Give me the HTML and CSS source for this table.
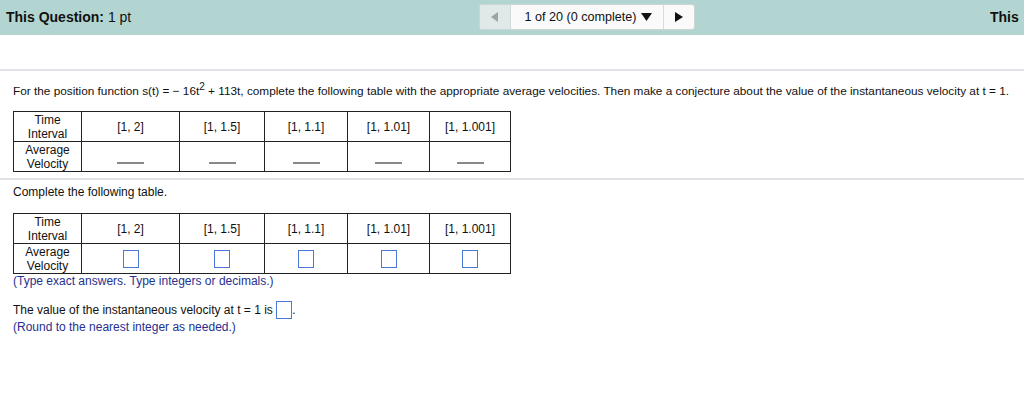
FILE: index.html
```html
<!DOCTYPE html>
<html>
<head>
<meta charset="utf-8">
<link rel="stylesheet" href="styles.css">
</head>
<body>
<div class="header">
  <div class="hleft"><b>This Question:</b> 1 pt</div>
  <div class="nav">
    <div class="nbtn prev"><svg width="8" height="10" viewBox="0 0 8 10"><path d="M7 0 L0 5 L7 10 Z" fill="#9aa5a3"/></svg></div>
    <div class="nmid">1 of 20 (0 complete) <svg width="11" height="8" viewBox="0 0 11 8"><path d="M0 0 H11 L5.5 8 Z" fill="#111"/></svg></div>
    <div class="nbtn next"><svg width="8" height="10" viewBox="0 0 8 10"><path d="M0 0 L8 5 L0 10 Z" fill="#111"/></svg></div>
  </div>
  <div class="hright"><b>This</b></div>
</div>
<div class="gap"></div>
<div class="content">
  <p class="q">For the position function s(t) = &minus; 16t<sup>2</sup> + 113t, complete the following table with the appropriate average velocities. Then make a conjecture about the value of the instantaneous velocity at t = 1.</p>
  <table class="tbl">
    <tr><td class="lab">Time<br>Interval</td><td class="c1">[1, 2]</td><td class="c2">[1, 1.5]</td><td class="c3">[1, 1.1]</td><td class="c4">[1, 1.01]</td><td class="c5">[1, 1.001]</td></tr>
    <tr><td class="lab">Average<br>Velocity</td><td><span class="dash"></span></td><td><span class="dash"></span></td><td><span class="dash"></span></td><td><span class="dash"></span></td><td><span class="dash"></span></td></tr>
  </table>
</div>
<div class="sep2"></div>
<div class="content">
  <p class="sub">Complete the following table.</p>
  <table class="tbl tbl2">
    <tr><td class="lab">Time<br>Interval</td><td class="c1">[1, 2]</td><td class="c2">[1, 1.5]</td><td class="c3">[1, 1.1]</td><td class="c4">[1, 1.01]</td><td class="c5">[1, 1.001]</td></tr>
    <tr><td class="lab">Average<br>Velocity</td><td><span class="box"></span></td><td><span class="box"></span></td><td><span class="box"></span></td><td><span class="box"></span></td><td><span class="box"></span></td></tr>
  </table>
  <p class="hint">(Type exact answers. Type integers or decimals.)</p>
  <p class="val">The value of the instantaneous velocity at t = 1 is <span class="box inl"></span>.</p>
  <p class="hint hint2">(Round to the nearest integer as needed.)</p>
</div>
</body>
</html>
```
FILE: styles.css
```css
html, body { margin: 0; padding: 0; background: #fff; }
body { font-family: "Liberation Sans", Arial, sans-serif; color: #111; font-size: 12px; }
.header { height: 35px; background: #b3d5d1; display: flex; align-items: flex-start; position: relative; }
.hleft { font-size: 14px; padding: 9px 0 0 6px; width: 473px; }
.hright { font-size: 14px; padding: 9px 0 0 0; margin-left: auto; width: 34px; overflow: hidden; white-space: nowrap; }
.nav { display: flex; margin-top: 4px; height: 26px; border: 1px solid #c9d6d4; border-radius: 3px; box-sizing: border-box; overflow: hidden; background: #fafafa; }
.nbtn { width: 30px; display: flex; align-items: center; justify-content: center; }
.prev { background: #dfe9e7; border-right: 1px solid #cfd9d7; }
.next { border-left: 1px solid #dadada; }
.nmid { width: 152px; display: flex; align-items: center; justify-content: center; gap: 4px; font-size: 12.6px; padding-left: 2px; box-sizing: border-box; }
.gap { height: 34px; border-bottom: 2px solid #dfe3e8; }
.content { padding-left: 13px; }
.q { margin: 13px 0 0 0; line-height: 14px; font-size: 11.8px; white-space: nowrap; }
.q sup { font-size: 10px; line-height: 0; vertical-align: 5px; }
.tbl { border-collapse: collapse; margin-top: 13px; font-size: 12px; }
.tbl td { border: 1px solid #222; text-align: center; padding: 0; height: 29px; line-height: 14px; }
.tbl td.lab { width: 67px; }
.tbl td.c1 { width: 97px; }
.tbl td.c2 { width: 84px; }
.tbl td.c3 { width: 82px; }
.tbl td.c4 { width: 81px; }
.tbl td.c5 { width: 80px; }
.dash { display: inline-block; width: 27px; height: 2px; background: #888; vertical-align: middle; margin-top: 13px; }
.sep2 { height: 0; border-top: 2px solid #dfe3e8; margin-top: 6px; }
.sub { margin: 6px 0 0 0; font-size: 12px; line-height: 13px; }
.tbl2 { margin-top: 14px; }
.box { display: inline-block; width: 16px; height: 18px; border: 1px solid #4a78d6; box-sizing: border-box; vertical-align: middle; background: #fff; }
.hint { margin: 0; color: #26308f; font-size: 12px; line-height: 14px; }
.val { margin: 13px 0 0 0; font-size: 12px; line-height: 18px; }
.val .box { vertical-align: -5px; }
.hint2 { margin-top: 1px; }
```
